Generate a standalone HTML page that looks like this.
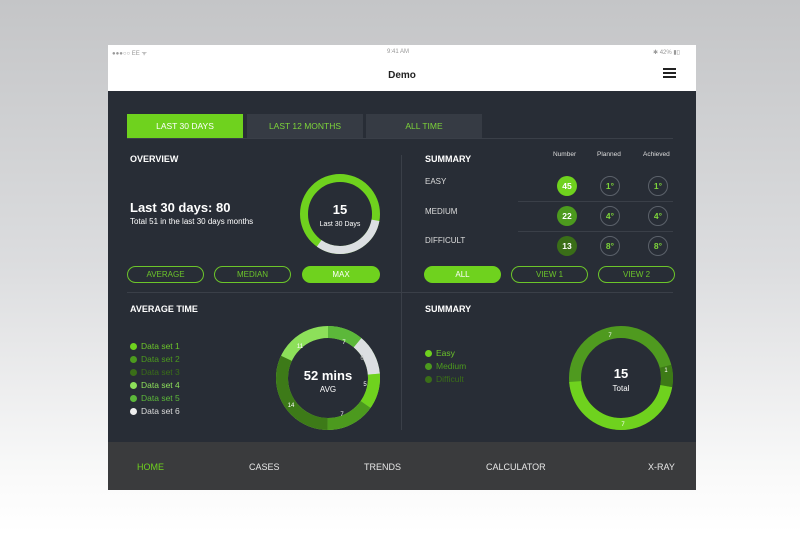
<!DOCTYPE html>
<html><head><meta charset="utf-8"><style>
*{margin:0;padding:0;box-sizing:border-box}
body{width:800px;height:533px;overflow:hidden;background:linear-gradient(#c4c5c7 0%,#dcdddf 50%,#fafafa 90%,#fff 100%);font-family:"Liberation Sans",sans-serif;position:relative}
.a{position:absolute}
#dev{left:108px;top:45px;width:588px;height:445px;background:#fff}
#nav{left:0;top:397px;width:588px;height:48px;background:#3a3b3d}
.t{color:#fff;font-size:9px;font-weight:bold}
.tab{top:69px;height:25px;font-size:8.5px;text-align:center;line-height:25px;color:#7dd43a;background:#363b44}
.pill{height:17px;border:1px solid #6cc52a;border-radius:9px;color:#6cc52a;font-size:8px;text-align:center;line-height:15px}
.pill.on{background:#6fd21e;color:#fff;border-color:#6fd21e}
.c{width:20px;height:20px;border-radius:50%;text-align:center;line-height:20px;font-size:8.5px;font-weight:bold;color:#fff}
.o{border:1px solid #5b616a;color:#7dd43a;line-height:18px}
.lg{font-size:8.5px;color:#6cc52a}
.lg i{display:inline-block;width:7px;height:7px;border-radius:50%;margin-right:4px;vertical-align:-0.5px}
.nv{top:20px;font-size:9px;color:#e8e8e8}
</style></head><body>
<div id="dev" class="a">
 <div class="a" style="left:4px;top:4px;font-size:6px;color:#999">●●●○○ EE ᯤ</div>
 <div class="a" style="left:279px;top:4px;font-size:6px;color:#999">9:41 AM</div>
 <div class="a" style="left:545px;top:4px;font-size:6px;color:#999">✱ 42% ▮▯</div>
 <div class="a" style="left:0;top:25px;width:588px;text-align:center;font-size:10px;font-weight:bold;color:#222">Demo</div>
 <div class="a" style="left:555px;top:23px;width:13px;height:2px;background:#222;box-shadow:0 4px #222,0 8px #222"></div>
 <div class="a" style="left:0;top:46px;width:588px;height:351px;background:#282d36"></div>
 <div>
  <div class="a tab" style="left:19px;width:116px;background:#6fd21e;color:#fff">LAST 30 DAYS</div>
  <div class="a tab" style="left:139px;width:116px">LAST 12 MONTHS</div>
  <div class="a tab" style="left:258px;width:116px">ALL TIME</div>
  <div class="a" style="left:19px;top:93px;width:546px;height:1px;background:#3a3f48"></div>
  <div class="a" style="left:293px;top:110px;width:1px;height:275px;background:#3a3f48"></div>
  <div class="a" style="left:19px;top:247px;width:546px;height:1px;background:#3a3f48"></div>
  <div class="a t" style="left:22px;top:109px">OVERVIEW</div>
  <div class="a" style="left:22px;top:155px;color:#fff;font-size:13px;font-weight:bold">Last 30 days: 80</div>
  <div class="a" style="left:22px;top:172px;color:#fff;font-size:8px">Total 51 in the last 30 days months</div>
  <svg class="a" style="left:192px;top:129px" width="80" height="80" viewBox="0 0 80 80"><g transform="rotate(-90 40 40)" fill="none" stroke-width="8">
   <circle cx="40" cy="40" r="36" stroke="#6fd21e"/>
   <circle cx="40" cy="40" r="36" stroke="#dcdfe2" stroke-dasharray="72.3 500" stroke-dashoffset="-62.8"/></g>
   <text x="40" y="40" fill="#fff" font-size="13" font-weight="bold" text-anchor="middle" font-family="Liberation Sans">15</text>
   <text x="40" y="52" fill="#fff" font-size="7" text-anchor="middle" font-family="Liberation Sans">Last 30 Days</text></svg>
  <div class="a pill" style="left:19px;top:221px;width:77px">AVERAGE</div>
  <div class="a pill" style="left:106px;top:221px;width:77px">MEDIAN</div>
  <div class="a pill on" style="left:194px;top:221px;width:78px">MAX</div>
  <div class="a t" style="left:317px;top:109px">SUMMARY</div>
  <div class="a" style="left:445px;top:106px;font-size:6.5px;color:#ddd">Number</div>
  <div class="a" style="left:489px;top:106px;font-size:6.5px;color:#ddd">Planned</div>
  <div class="a" style="left:535px;top:106px;font-size:6.5px;color:#ddd">Achieved</div>
  <div class="a" style="left:317px;top:132px;font-size:8px;color:#ddd">EASY</div>
  <div class="a" style="left:317px;top:162px;font-size:8px;color:#ddd">MEDIUM</div>
  <div class="a" style="left:317px;top:191px;font-size:8px;color:#ddd">DIFFICULT</div>
  <div class="a" style="left:410px;top:156px;width:155px;height:1px;background:#3a3f48"></div>
  <div class="a" style="left:410px;top:186px;width:155px;height:1px;background:#3a3f48"></div>
  <div class="a c" style="left:449px;top:131px;background:#6fd21e">45</div>
  <div class="a c" style="left:449px;top:161px;background:#4c9a1e">22</div>
  <div class="a c" style="left:449px;top:191px;background:#3a6e18">13</div>
  <div class="a c o" style="left:492px;top:131px">1°</div>
  <div class="a c o" style="left:492px;top:161px">4°</div>
  <div class="a c o" style="left:492px;top:191px">8°</div>
  <div class="a c o" style="left:540px;top:131px">1°</div>
  <div class="a c o" style="left:540px;top:161px">4°</div>
  <div class="a c o" style="left:540px;top:191px">8°</div>
  <div class="a pill on" style="left:316px;top:221px;width:77px">ALL</div>
  <div class="a pill" style="left:403px;top:221px;width:77px">VIEW 1</div>
  <div class="a pill" style="left:490px;top:221px;width:77px">VIEW 2</div>
  <div class="a t" style="left:22px;top:259px">AVERAGE TIME</div>
  <div class="a lg" style="left:22px;top:295px;line-height:13px">
   <div><i style="background:#6fd21e"></i>Data set 1</div>
   <div style="color:#4c9a1e"><i style="background:#4c9a1e"></i>Data set 2</div>
   <div style="color:#3a6e18"><i style="background:#3a6e18"></i>Data set 3</div>
   <div style="color:#8de05a"><i style="background:#8de05a"></i>Data set 4</div>
   <div style="color:#5cb83a"><i style="background:#5cb83a"></i>Data set 5</div>
   <div style="color:#ddd"><i style="background:#eee"></i>Data set 6</div></div>
  <svg class="a" style="left:167px;top:280px" width="106" height="106" viewBox="0 0 106 106"><g transform="rotate(-90 53 53)" fill="none" stroke-width="12">
   <circle cx="53" cy="53" r="46" stroke="#8de05a"/>
   <circle cx="53" cy="53" r="46" stroke="#5cb83a" stroke-dasharray="32.1 500"/>
   <circle cx="53" cy="53" r="46" stroke="#dcdfe2" stroke-dasharray="36.1 500" stroke-dashoffset="-32.1"/>
   <circle cx="53" cy="53" r="46" stroke="#6fd21e" stroke-dasharray="32.1 500" stroke-dashoffset="-68.2"/>
   <circle cx="53" cy="53" r="46" stroke="#4c9a1e" stroke-dasharray="44.2 500" stroke-dashoffset="-100.3"/>
   <circle cx="53" cy="53" r="46" stroke="#3d7a18" stroke-dasharray="92.3 500" stroke-dashoffset="-144.5"/></g>
   <g font-family="Liberation Sans" font-size="6" fill="#fff" text-anchor="middle"><text x="69" y="19">7</text><text x="87" y="35" fill="#aaa">6</text><text x="90" y="61">5</text><text x="67" y="91">7</text><text x="16" y="82">14</text><text x="25" y="23">11</text></g>
   <text x="53" y="55" fill="#fff" font-size="13" font-weight="bold" text-anchor="middle" font-family="Liberation Sans">52 mins</text>
   <text x="53" y="67" fill="#fff" font-size="8" text-anchor="middle" font-family="Liberation Sans">AVG</text></svg>
  <div class="a t" style="left:317px;top:259px">SUMMARY</div>
  <div class="a lg" style="left:317px;top:302px;line-height:13px">
   <div><i style="background:#6fd21e"></i>Easy</div>
   <div style="color:#4c9a1e"><i style="background:#4c9a1e"></i>Medium</div>
   <div style="color:#3a6e18"><i style="background:#3a6e18"></i>Difficult</div></div>
  <svg class="a" style="left:460px;top:280px" width="106" height="106" viewBox="0 0 106 106"><g transform="rotate(-90 53 53)" fill="none" stroke-width="12">
   <circle cx="53" cy="53" r="46" stroke="#4f9a1f"/>
   <circle cx="53" cy="53" r="46" stroke="#6fd21e" stroke-dasharray="132.5 500" stroke-dashoffset="-80.3"/>
   <circle cx="53" cy="53" r="46" stroke="#3d7a16" stroke-dasharray="20.1 500" stroke-dashoffset="-60.2"/></g>
   <g font-family="Liberation Sans" font-size="6" fill="#fff" text-anchor="middle"><text x="42" y="12">7</text><text x="98" y="47">1</text><text x="55" y="101">7</text></g>
   <text x="53" y="53" fill="#fff" font-size="13" font-weight="bold" text-anchor="middle" font-family="Liberation Sans">15</text>
   <text x="53" y="66" fill="#fff" font-size="8" text-anchor="middle" font-family="Liberation Sans">Total</text></svg>
 </div>
 <div id="nav" class="a">
  <div class="a nv" style="left:29px;color:#6fd21e">HOME</div>
  <div class="a nv" style="left:141px">CASES</div>
  <div class="a nv" style="left:256px">TRENDS</div>
  <div class="a nv" style="left:378px">CALCULATOR</div>
  <div class="a nv" style="left:540px">X-RAY</div>
 </div>
</div>
</body></html>
